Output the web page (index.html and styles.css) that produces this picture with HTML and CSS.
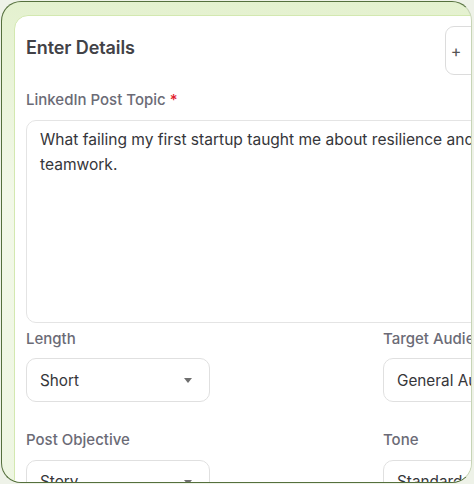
FILE: index.html
```html
<!DOCTYPE html>
<html lang="en">
<head>
<meta charset="utf-8">
<title>Enter Details</title>
<link rel="stylesheet" href="styles.css">
</head>
<body>
<div class="frame">
  <div class="card">
    <div class="header">
      <h2 class="title">Enter Details</h2>
      <button class="add-btn" type="button">+</button>
    </div>
    <label class="label topic-label">LinkedIn Post Topic <span class="req">*</span></label>
    <div class="textarea">What failing my first startup taught me about resilience and<br>teamwork.</div>
    <div class="grid">
      <div class="field">
        <label class="label">Length</label>
        <div class="select">Short<span class="caret"></span></div>
      </div>
      <div class="field">
        <label class="label">Target Audience</label>
        <div class="select">General Audience<span class="caret"></span></div>
      </div>
      <div class="field">
        <label class="label">Post Objective</label>
        <div class="select">Story<span class="caret"></span></div>
      </div>
      <div class="field">
        <label class="label">Tone</label>
        <div class="select">Standard<span class="caret"></span></div>
      </div>
    </div>
  </div>
</div>
</body>
</html>
```

FILE: styles.css
```css
html, body {
  margin: 0;
  padding: 0;
}
body {
  background: #eef2e8;
  font-family: Inter, "Noto Sans", sans-serif;
  width: 474px;
  height: 484px;
  overflow: hidden;
}
.frame {
  box-sizing: border-box;
  margin: 1px 0 0 1px;
  width: 471px;
  height: 482px;
  border: 1.5px solid #55703d;
  border-right-color: #c7d4b6;
  border-radius: 20px;
  overflow: hidden;
  padding: 12.5px 0 0 12px;
  background: linear-gradient(180deg, #e4f1cf 0%, #f2f8e8 40%, #eef6e2 100%);
}
.card {
  box-sizing: border-box;
  width: 560px;
  min-height: 520px;
  background: #ffffff;
  border: 1.5px solid #d3e8b0;
  border-radius: 14px 14px 0 0;
  padding: 10.5px 0 0 11px;
}
.header {
  display: flex;
  align-items: flex-start;
  width: 467px;
}
.title {
  margin: 9.5px 0 0 0;
  font-size: 18px;
  line-height: 24px;
  font-weight: 600;
  color: #424247;
  letter-spacing: -0.1px;
}
.add-btn {
  margin-left: auto;
  box-sizing: border-box;
  width: 48px;
  height: 49px;
  border: 1px solid #dcdcdc;
  border-radius: 9px;
  background: #ffffff;
  color: #555;
  font-family: Inter, sans-serif;
  font-size: 16px;
  padding: 0 26px 0 0;
}
.label {
  display: block;
  font-size: 15px;
  line-height: 20px;
  font-weight: 500;
  color: #6b6b76;
}
.topic-label {
  margin-top: 14.5px;
}
.req {
  color: #e11d2e;
}
.textarea {
  box-sizing: border-box;
  margin-top: 10.5px;
  width: 467px;
  height: 203px;
  border: 1px solid #e4e4e4;
  border-radius: 10px;
  padding: 6px 0 0 13px;
  font-size: 15.55px;
  line-height: 25px;
  color: #36363a;
  white-space: nowrap;
}
.grid {
  display: grid;
  grid-template-columns: 341px 341px;
  column-gap: 16px;
  row-gap: 28px;
  margin-top: 5.5px;
}
.field .label {
  margin-bottom: 9.5px;
}
.select {
  box-sizing: border-box;
  position: relative;
  width: 184px;
  height: 44px;
  border: 1px solid #e0e0e0;
  border-radius: 10px;
  padding: 0 0 0 13px;
  display: flex;
  align-items: center;
  font-size: 15.3px;
  color: #36363a;
  white-space: nowrap;
  overflow: hidden;
}
.caret {
  position: absolute;
  right: 17px;
  top: 19px;
  width: 0;
  height: 0;
  border-left: 4.5px solid transparent;
  border-right: 4.5px solid transparent;
  border-top: 5px solid #6f6f6f;
}
```
